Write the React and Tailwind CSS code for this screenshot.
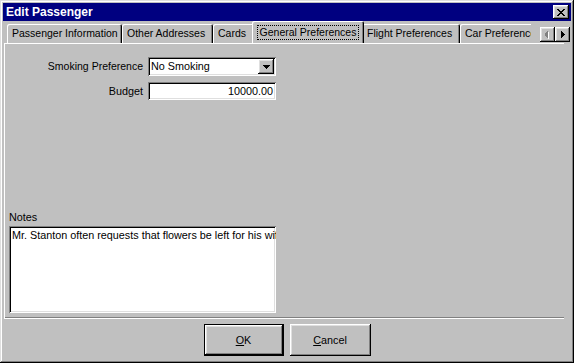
import React from "react"

const raised = "shadow-[inset_-1px_-1px_#000,inset_1px_1px_#fff,inset_-2px_-2px_#808080,inset_2px_2px_#dfdfdf]"
const sunken = "shadow-[inset_1px_1px_#808080,inset_-1px_-1px_#fff,inset_2px_2px_#000,inset_-2px_-2px_#dfdfdf]"

const tabs = [
  { label: "Passenger Information", w: "w-[115px]" },
  { label: "Other Addresses", w: "w-[91px]" },
  { label: "Cards", w: "w-[41px]" },
  { label: "General Preferences", w: "w-[108px]", active: true },
  { label: "Flight Preferences", w: "w-[98px]" },
  { label: "Car Preferences", w: "w-[90px]" },
]

function Tab({ label, w, active }) {
  if (active) {
    return (
      <div className={`relative z-10 -mx-[2px] -mb-px h-[23px] ${w} box-content px-[2px] bg-[#c0c0c0] rounded-t-[2px] shadow-[inset_1px_1px_#fff,inset_-1px_0_#000,inset_-2px_0_#808080] flex items-center justify-center shrink-0`}>
        <span className="border border-dotted border-black px-[2px] leading-[13px] -mt-px">{label}</span>
      </div>
    )
  }
  return (
    <div className={`h-[19px] ${w} shrink-0 bg-[#c0c0c0] rounded-t-[2px] shadow-[inset_1px_1px_#fff,inset_-1px_0_#000,inset_-2px_0_#808080] flex items-center pl-[5px] pt-px whitespace-nowrap overflow-hidden`}>
      {label}
    </div>
  )
}

export default function App() {
  return (
    <div
      className="w-[574px] h-[363px] bg-[#c0c0c0] p-[3px] flex flex-col text-black text-[10.5px] shadow-[inset_-1px_-1px_#000,inset_1px_1px_#dfdfdf,inset_-2px_-2px_#808080,inset_2px_2px_#fff]"
      style={{ fontFamily: '"Liberation Sans", Arial, sans-serif' }}
    >
      {/* title bar */}
      <div className="h-[18px] bg-[#000080] flex items-center justify-between pl-[3px] pr-[2px]">
        <span className="text-white font-bold text-[12px] leading-none">Edit Passenger</span>
        <button className={`w-[16px] h-[14px] bg-[#c0c0c0] ${raised} flex items-center justify-center`}>
          <svg width="8" height="7" viewBox="0 0 8 7" shapeRendering="crispEdges">
            <path d="M0 0h2v1h-2zM6 0h2v1h-2zM1 1h2v1h-2zM5 1h2v1h-2zM2 2h4v1h-4zM3 3h2v1h-2zM2 4h4v1h-4zM1 5h2v1h-2zM5 5h2v1h-2zM0 6h2v1h-2zM6 6h2v1h-2z" fill="#000" />
          </svg>
        </button>
      </div>

      {/* tab strip */}
      <div className="h-[22px] flex items-end">
        <div className="w-[528px] h-full flex items-end pl-[4px] overflow-hidden">
          {tabs.map(t => <Tab key={t.label} {...t} />)}
        </div>
        <div className="flex ml-[9px] mb-[1px]">
          <div className={`w-[15px] h-[15px] bg-[#c0c0c0] ${raised} flex items-center justify-center`}>
            <svg width="5" height="8" viewBox="0 0 5 8" shapeRendering="crispEdges">
              <path d="M4 1v7L0 4.5z" fill="#fff" />
              <path d="M3 0v7L-1 3.5z" fill="#808080" />
            </svg>
          </div>
          <div className={`w-[15px] h-[15px] bg-[#c0c0c0] ${raised} flex items-center justify-center`}>
            <svg width="4" height="7" viewBox="0 0 4 7" shapeRendering="crispEdges">
              <path d="M0 0v7L4 3.5z" fill="#000" />
            </svg>
          </div>
        </div>
      </div>

      {/* tab panel */}
      <div className="ml-px mr-[7px] h-[276px] flex flex-col pl-[5px] pt-[14px] pb-[6px] shadow-[inset_1px_1px_#fff,inset_0_-1px_#fff,inset_0_-2px_#808080]">
        <div className="flex items-center">
          <div className="w-[139px] pr-[5px] text-right">Smoking Preference</div>
          <div className={`w-[128px] h-[19px] bg-white ${sunken} flex items-center justify-between pl-[3px] pr-[2px] text-[10.8px]`}>
            <span>No Smoking</span>
            <div className={`w-[16px] h-[15px] bg-[#c0c0c0] ${raised} flex items-center justify-center`}>
              <svg width="7" height="4" viewBox="0 0 7 4" shapeRendering="crispEdges">
                <path d="M0 0h7v1h-7zM1 1h5v1h-5zM2 2h3v1h-3zM3 3h1v1h-1z" fill="#000" />
              </svg>
            </div>
          </div>
        </div>
        <div className="flex items-center mt-[6px]">
          <div className="w-[139px] pr-[5px] text-right text-[10.8px]">Budget</div>
          <div className={`w-[128px] h-[18px] bg-white ${sunken} flex items-center justify-end pr-[3px] text-[10.8px]`}>
            10000.00
          </div>
        </div>

        <div className="flex-1" />

        <div className="leading-[13px] mb-[2px] text-[10.8px]">Notes</div>
        <div className={`w-[267px] h-[87px] bg-white ${sunken} px-[3px] pt-[3px] whitespace-nowrap overflow-hidden leading-[13px] text-[10.8px]`}>
          Mr. Stanton often requests that flowers be left for his wife
        </div>
      </div>

      {/* buttons */}
      <div className="flex-1 flex justify-center gap-[6px] pt-[5px] text-[10.8px]">
        <button className="w-[80px] h-[32px] border border-black bg-[#c0c0c0]">
          <div className={`w-full h-full ${raised} flex items-center justify-center`}>
            <span><span className="underline">O</span>K</span>
          </div>
        </button>
        <button className={`w-[81px] h-[32px] bg-[#c0c0c0] ${raised} flex items-center justify-center`}>
          <span><span className="underline">C</span>ancel</span>
        </button>
      </div>
    </div>
  )
}
